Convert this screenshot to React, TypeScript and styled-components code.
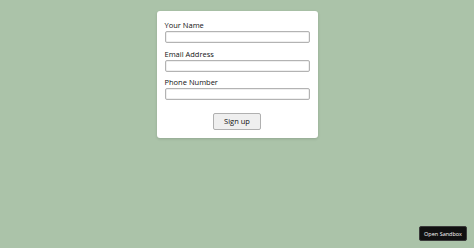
import React from 'react'
import styled, { createGlobalStyle } from 'styled-components'

const GlobalStyle = createGlobalStyle`
  html, body {
    margin: 0;
    padding: 0;
    height: 100%;
    background: #abc3a9;
    font-family: 'Open Sans', 'DejaVu Sans', sans-serif;
  }
`

const Page = styled.div`
  display: flex;
  justify-content: center;
  padding-top: 11px;
`

const Card = styled.form`
  width: 161px;
  box-sizing: border-box;
  background: #fff;
  border-radius: 3px;
  box-shadow: 0 1px 3px rgba(0, 0, 0, 0.15);
  padding: 8px 8px 8px 8px;
  display: flex;
  flex-direction: column;
`

const Field = styled.div`
  display: flex;
  flex-direction: column;
  margin-bottom: 4.5px;
`

const Label = styled.label`
  font-size: 7.5px;
  color: #111;
  line-height: 12px;
`

const Input = styled.input`
  box-sizing: border-box;
  height: 12px;
  width: 145px;
  border: 1px solid #b3b3b3;
  border-radius: 2px;
  box-shadow: inset 0 0 0 0.5px #e0e0e0;
  padding: 0 3px;
  font-size: 7px;
`

const Actions = styled.div`
  display: flex;
  justify-content: center;
  margin-top: 8px;
`

const Button = styled.button`
  box-sizing: border-box;
  width: 48px;
  height: 17px;
  background: #efefef;
  border: 1px solid #b0b0b0;
  border-radius: 2px;
  font-family: inherit;
  font-size: 7.5px;
  color: #111;
  padding: 0;
`

const SandboxLink = styled.a`
  position: fixed;
  right: 7px;
  bottom: 7px;
  background: #111;
  color: #fff;
  font-size: 5.5px;
  padding: 3.5px 4px;
  border-radius: 2px;
  border: 1px solid #3a3a3a;
  line-height: 6px;
`

const App: React.FC = () => {
  return (
    <>
      <GlobalStyle />
      <Page>
        <Card onSubmit={(e) => e.preventDefault()}>
          <Field>
            <Label>Your Name</Label>
            <Input type="text" />
          </Field>
          <Field>
            <Label>Email Address</Label>
            <Input type="email" />
          </Field>
          <Field>
            <Label>Phone Number</Label>
            <Input type="tel" />
          </Field>
          <Actions>
            <Button type="submit">Sign up</Button>
          </Actions>
        </Card>
      </Page>
      <SandboxLink>Open Sandbox</SandboxLink>
    </>
  )
}

export default App
